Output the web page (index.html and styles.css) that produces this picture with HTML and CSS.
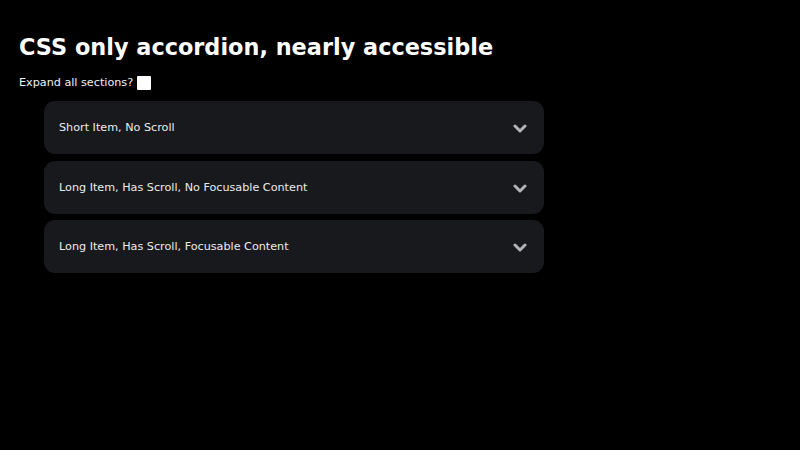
FILE: index.html
```html
<!DOCTYPE html>
<html>
<head>
<meta charset="utf-8">
<link rel="stylesheet" href="styles.css">
</head>
<body>
<main class="page">
  <h1 class="title">CSS only accordion, nearly accessible</h1>
  <label class="expand">Expand all sections? <span class="box"></span></label>
  <div class="accordion">
    <div class="item"><span class="label">Short Item, No Scroll</span><svg class="chev" viewBox="0 0 14 10" width="14" height="10"><path d="M2 2 L7 7 L12 2" fill="none" stroke="#b4b4b8" stroke-width="3" stroke-linecap="round" stroke-linejoin="round"/></svg></div>
    <div class="item"><span class="label">Long Item, Has Scroll, No Focusable Content</span><svg class="chev" viewBox="0 0 14 10" width="14" height="10"><path d="M2 2 L7 7 L12 2" fill="none" stroke="#b4b4b8" stroke-width="3" stroke-linecap="round" stroke-linejoin="round"/></svg></div>
    <div class="item"><span class="label">Long Item, Has Scroll, Focusable Content</span><svg class="chev" viewBox="0 0 14 10" width="14" height="10"><path d="M2 2 L7 7 L12 2" fill="none" stroke="#b4b4b8" stroke-width="3" stroke-linecap="round" stroke-linejoin="round"/></svg></div>
  </div>
</main>
</body>
</html>
```
FILE: styles.css
```css
html, body { margin: 0; padding: 0; background: #000; }
body { font-family: "DejaVu Sans", sans-serif; color: #fff; }
.page { padding: 34px 19px; }
.title { margin: 0; font-size: 22.4px; font-weight: bold; line-height: 26px; }
.expand { display: flex; align-items: center; gap: 4px; margin-top: 16px; font-size: 11.2px; line-height: 14px; color: #f2f2f2; }
.box { display: inline-block; width: 14px; height: 14px; background: #fff; border-radius: 1px; }
.accordion { margin: 11px 0 0 25px; width: 500px; display: flex; flex-direction: column; gap: 6.5px; }
.item { height: 53px; box-sizing: border-box; background: #18191c; border-radius: 11px; display: flex; align-items: center; justify-content: space-between; padding: 0 17px 0 15px; font-size: 11.2px; color: #ececec; }
.chev { display: block; margin-top: 3px; }
```
